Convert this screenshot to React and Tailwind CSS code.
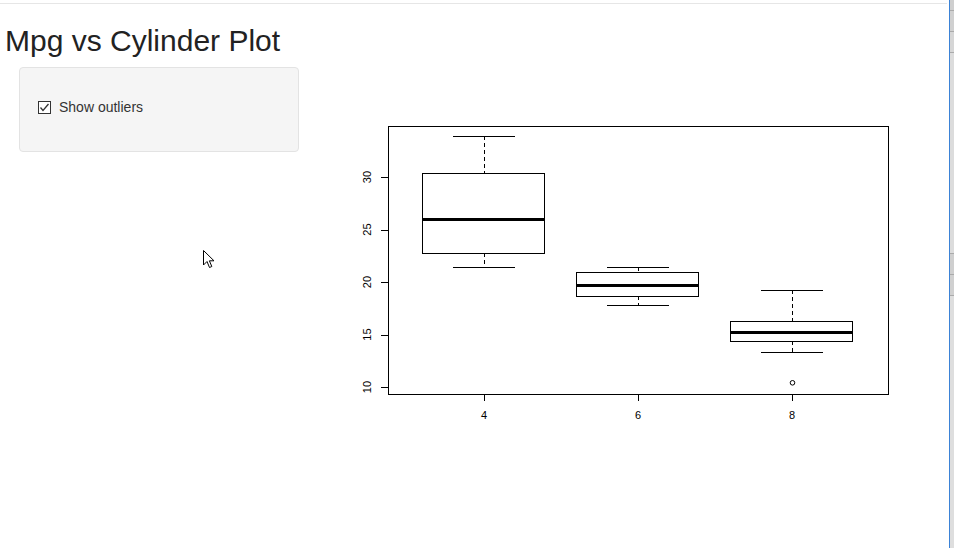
const yv = (v) => 387 - (v - 10) * 10.5

const boxes = [
  { label: '4', x: 484, lo: 21.4, q1: 22.8, med: 26, q3: 30.4, hi: 33.9, out: [] },
  { label: '6', x: 638, lo: 17.8, q1: 18.65, med: 19.7, q3: 21, hi: 21.4, out: [] },
  { label: '8', x: 792, lo: 13.3, q1: 14.4, med: 15.2, q3: 16.25, hi: 19.2, out: [10.4] },
]

function BoxPlot() {
  const r = (n) => Math.round(n) + 0.5
  return (
    <svg
      width="560"
      height="320"
      viewBox="340 110 560 320"
      className="block shrink-0"
      shapeRendering="crispEdges"
      style={{ fontFamily: '"Liberation Sans", Arial, sans-serif' }}
    >
      <rect x="388.5" y="126.5" width="500" height="268" fill="none" stroke="#000" strokeWidth="1" />
      {[10, 15, 20, 25, 30].map((v) => (
        <g key={v}>
          <line x1="381" x2="388" y1={r(yv(v))} y2={r(yv(v))} stroke="#000" />
          <text
            x="371"
            y={yv(v)}
            fontSize="11"
            textAnchor="middle"
            transform={`rotate(-90 371 ${yv(v)})`}
            fill="#000"
          >
            {v}
          </text>
        </g>
      ))}
      <line x1="388.5" x2="388.5" y1={yv(10)} y2={yv(30)} stroke="#000" />
      {boxes.map((b) => (
        <g key={b.label}>
          <line x1={b.x + 0.5} x2={b.x + 0.5} y1="394" y2="401" stroke="#000" />
          <text x={b.x} y="419" fontSize="11" textAnchor="middle" fill="#000">
            {b.label}
          </text>
          <line
            x1={b.x + 0.5}
            x2={b.x + 0.5}
            y1={yv(b.hi)}
            y2={yv(b.q3)}
            stroke="#000"
            strokeDasharray="4 3"
          />
          <line
            x1={b.x + 0.5}
            x2={b.x + 0.5}
            y1={yv(b.q1)}
            y2={yv(b.lo)}
            stroke="#000"
            strokeDasharray="4 3"
          />
          <line x1={b.x - 31} x2={b.x + 31} y1={r(yv(b.hi))} y2={r(yv(b.hi))} stroke="#000" />
          <line x1={b.x - 31} x2={b.x + 31} y1={r(yv(b.lo))} y2={r(yv(b.lo))} stroke="#000" />
          <rect
            x={b.x - 61.5}
            y={r(yv(b.q3))}
            width="122"
            height={Math.round(yv(b.q1)) - Math.round(yv(b.q3))}
            fill="#fff"
            stroke="#000"
          />
          <line x1={b.x - 61} x2={b.x + 61} y1={yv(b.med)} y2={yv(b.med)} stroke="#000" strokeWidth="3" />
          {b.out.map((o) => (
            <circle key={o} cx={b.x + 0.5} cy={yv(o)} r="2.3" fill="none" stroke="#000" shapeRendering="auto" />
          ))}
        </g>
      ))}
    </svg>
  )
}

function Cursor() {
  return (
    <svg width="14" height="20" viewBox="0 0 14 20" className="absolute left-[203px] top-[250px]">
      <path
        d="M0.5 0.5 L0.5 15 L4 11.5 L6.5 17.5 L8.8 16.5 L6.4 10.8 L11 10.8 Z"
        fill="#fff"
        stroke="#000"
        strokeWidth="1"
        strokeLinejoin="miter"
      />
    </svg>
  )
}

export default function App() {
  return (
    <div
      className="relative flex h-[548px] w-[954px] overflow-hidden bg-white text-[#333]"
      style={{ fontFamily: '"Liberation Sans", Arial, Helvetica, sans-serif' }}
    >
      <div className="w-[949px] shrink-0">
        <div className="mt-[3px] h-px w-[947px] bg-[#e6e6e6]" />
        <h1 className="ml-[5px] mt-[19px] text-[30px] leading-[36px] text-[#222]">Mpg vs Cylinder Plot</h1>
        <div className="mt-[8px] flex">
          <div className="ml-[19px] h-[85px] w-[280px] shrink-0 rounded-[4px] border border-[#e3e3e3] bg-[#f5f5f5] pl-[18px] pt-[29px]">
            <label className="flex items-center text-[14px] leading-[20px] text-[#333]">
              <span className="mr-[8px] flex h-[13px] w-[13px] items-center justify-center border border-[#333] bg-white">
                <svg width="11" height="11" viewBox="0 0 11 11">
                  <path d="M1.5 5.5 L4 8.5 L9.5 2" fill="none" stroke="#333" strokeWidth="1.3" />
                </svg>
              </span>
              Show outliers
            </label>
          </div>
          <div className="ml-[41px] mt-[43px]">
            <BoxPlot />
          </div>
        </div>
      </div>
      <div className="h-full w-px bg-[#3b82d6]" />
      <div className="flex h-full flex-1 flex-col bg-[#d4d4d4]">
        <div className="h-[10px] bg-[#cfcfcf]" />
        <div className="h-px bg-[#aaa]" />
        <div className="h-[20px] bg-[#d0d0d0]" />
        <div className="h-px bg-[#aaa]" />
        <div className="h-[20px] bg-[#d6d6d6]" />
        <div className="h-px bg-[#aaa]" />
        <div className="h-[200px] bg-[#dcdcdc]" />
        <div className="h-px bg-[#aaa]" />
        <div className="h-[20px] bg-[#cfcfcf]" />
        <div className="h-px bg-[#aaa]" />
        <div className="h-[20px] bg-[#d0d0d0]" />
        <div className="h-px bg-[#aaa]" />
        <div className="flex-1 bg-[#dedede]" />
      </div>
      <Cursor />
    </div>
  )
}
